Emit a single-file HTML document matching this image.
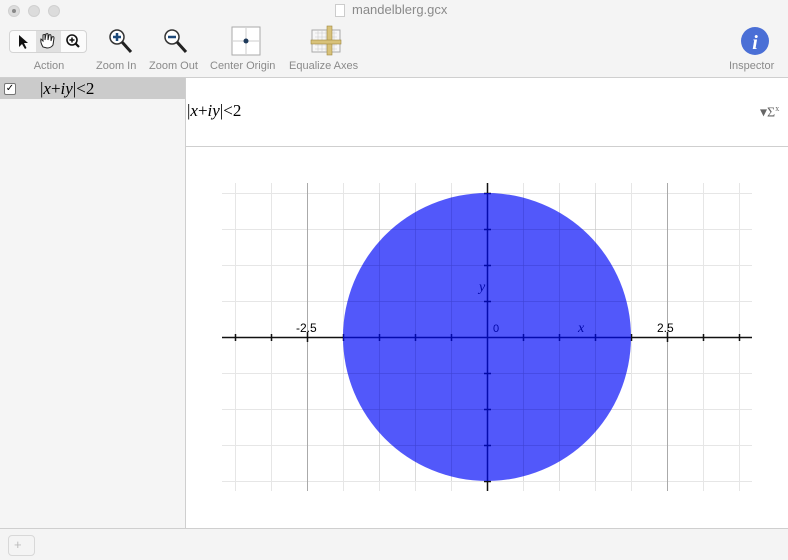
<!DOCTYPE html>
<html><head><meta charset="utf-8"><style>
*{margin:0;padding:0;box-sizing:border-box}
body{width:788px;height:560px;overflow:hidden;background:#fff;font-family:"Liberation Sans",sans-serif;position:relative}
.tb{position:absolute;left:0;top:0;width:788px;height:78px;background:#f4f4f4;border-bottom:1px solid #cfcfcf}
.dot{position:absolute;top:5px;width:12px;height:12px;border-radius:50%;background:#dcdcdc;border:1px solid #d0d0d0}
.lbl{position:absolute;top:60px;font-size:11px;color:#8a8a8a;text-align:center}
.side{position:absolute;left:0;top:78px;width:186px;height:450px;background:#f5f5f5;border-right:1px solid #cfcfcf}
.bot{position:absolute;left:0;top:528px;width:788px;height:32px;background:#f4f4f4;border-top:1px solid #cfcfcf}
.m{font-family:"Liberation Serif",serif}
</style></head><body>
<div class="tb">
<div class="dot" style="left:8px"><div style="width:4px;height:4px;border-radius:50%;background:#888;margin:3px"></div></div>
<div class="dot" style="left:28px"></div>
<div class="dot" style="left:48px"></div>
<div style="position:absolute;left:335px;top:4px;width:10px;height:13px;background:#fff;border:1px solid #ccc"></div>
<div style="position:absolute;left:352px;top:2px;font-size:13px;color:#8a8a8a">mandelblerg.gcx</div>
<div style="position:absolute;left:9px;top:30px;width:78px;height:23px;border:1px solid #d4d4d4;border-radius:4px;background:#fbfbfb"></div>
<div style="position:absolute;left:36px;top:31px;width:25px;height:21px;background:#e0e0e0"></div>
<svg style="position:absolute;left:0;top:0" width="788" height="78">
<path d="M19 35 L19 47 L22 44 L25 49 L26.5 48 L24 43 L28 43 Z" fill="#111"/>
<path d="M43 47 Q40 42 41 39 L43 41 L43 35 Q45 34 45 35 L45 40 L46 34 Q48 33 48 34.5 L48 40 L49 35 Q51 34 51 36 L51 41 L52 37 Q54 36 54 38 L53 45 Q51 48 47 48 Z" fill="#fff" stroke="#222" stroke-width="1"/>
<circle cx="72" cy="40" r="5" fill="none" stroke="#111" stroke-width="1.6"/><path d="M69.5 40h5M72 37.5v5" stroke="#111" stroke-width="1.5"/><path d="M75.5 43.5 L79 47" stroke="#111" stroke-width="2.2"/>
<circle cx="117" cy="37" r="7" fill="#fff" stroke="#333" stroke-width="1.5"/><path d="M113 37h8M117 33v8" stroke="#1e4a7a" stroke-width="2.5"/><path d="M122 42 L131 52" stroke="#222" stroke-width="3"/>
<circle cx="172" cy="37" r="7" fill="#fff" stroke="#333" stroke-width="1.5"/><path d="M168 37h8" stroke="#1e4a7a" stroke-width="2.5"/><path d="M177 42 L186 52" stroke="#222" stroke-width="3"/>
<rect x="232" y="27" width="28" height="28" fill="#fff" stroke="#aaa"/><path d="M246 28v26M233 41h26" stroke="#ccc"/><circle cx="246" cy="41" r="2.5" fill="#1e3a5a"/>
<rect x="312" y="30" width="28" height="22" fill="#f7f7f7" stroke="#aaa"/><path d="M315 33h22M315 37h22M315 41h22M315 45h22M315 49h22M318 30v22M322 30v22M326 30v22M330 30v22M334 30v22" stroke="#ccc" stroke-width=".6"/>
<rect x="327" y="26" width="5" height="29" fill="#d8c27a" stroke="#a08840" stroke-width=".6"/><rect x="311" y="40" width="30" height="4" fill="#d8c27a" stroke="#a08840" stroke-width=".6"/>
<circle cx="755" cy="41" r="14" fill="#4a6fd6"/><text x="755" y="49" font-family="Liberation Serif" font-style="italic" font-weight="bold" font-size="20" fill="#fff" text-anchor="middle">i</text>
</svg>
<div class="lbl" style="left:22px;width:54px">Action</div>
<div class="lbl" style="left:96px">Zoom In</div>
<div class="lbl" style="left:149px">Zoom Out</div>
<div class="lbl" style="left:210px">Center Origin</div>
<div class="lbl" style="left:289px">Equalize Axes</div>
<div class="lbl" style="left:729px">Inspector</div>
</div>
<div class="side">
<div style="position:absolute;left:0;top:0;width:185px;height:21px;background:#cbcbcb"></div>
<div style="position:absolute;left:4px;top:5px;width:12px;height:12px;border:1px solid #777;border-radius:2px;background:#fff;font-size:10px;line-height:10px;text-align:center">✓</div>
<div class="m" style="position:absolute;left:40px;top:1px;font-size:17px">|<i>x</i>+<i>iy</i>|&lt;2</div>
</div>
<div class="m" style="position:absolute;left:187px;top:101px;font-size:17px">|<i>x</i>+<i>iy</i>|&lt;2</div>
<div class="m" style="position:absolute;left:760px;top:104px;font-size:14px;color:#666">▾Σ<sup style="font-size:8px">x</sup></div>
<div style="position:absolute;left:186px;top:146px;width:602px;height:1px;background:#cfcfcf"></div>
<svg style="position:absolute;left:0;top:0" width="788" height="528">
<g stroke="#e6e6e6" stroke-width="1">
<path d="M235.5 183V491M271.5 183V491M343.5 183V491M379.5 183V491M415.5 183V491M451.5 183V491M523.5 183V491M559.5 183V491M595.5 183V491M631.5 183V491M703.5 183V491M739.5 183V491"/>
<path d="M222 193.5H752M222 229.5H752M222 265.5H752M222 301.5H752M222 373.5H752M222 409.5H752M222 445.5H752M222 481.5H752"/>
</g>
<path d="M307.5 183V491M667.5 183V491" stroke="#aaa"/>
<path d="M222 337.5H752M487.5 183V491" stroke="#111" stroke-width="1.5"/>
<g stroke="#111" stroke-width="1.5"><path d="M235.5 334v7M271.5 334v7M307.5 332v10M343.5 334v7M379.5 334v7M415.5 334v7M451.5 334v7M523.5 334v7M559.5 334v7M595.5 334v7M631.5 334v7M667.5 332v10M703.5 334v7M739.5 334v7M484 193.5h7M484 229.5h7M484 265.5h7M484 301.5h7M484 373.5h7M484 409.5h7M484 445.5h7M484 481.5h7"/></g>
<text x="296" y="332" font-size="12" fill="#000">-2.5</text>
<text x="657" y="332" font-size="12" fill="#000">2.5</text>
<text x="493" y="332" font-size="11" fill="#000">0</text>
<text x="578" y="332" font-size="14" font-family="Liberation Serif" font-style="italic" fill="#000">x</text>
<text x="479" y="291" font-size="14" font-family="Liberation Serif" font-style="italic" fill="#000">y</text>
<circle cx="487" cy="337" r="144" fill="rgb(0,9,247)" fill-opacity="0.68"/>
<g stroke="rgba(0,0,0,0.05)" stroke-width="1">
<path d="M379.5 193V481M415.5 193V481M451.5 193V481M523.5 193V481M559.5 193V481M595.5 193V481"/>
<path d="M343 229.5H631M343 265.5H631M343 301.5H631M343 373.5H631M343 409.5H631M343 445.5H631"/>
</g>
</svg>
<div class="bot"><div style="position:absolute;left:8px;top:6px;width:27px;height:21px;border:1px solid #d8d8d8;border-radius:4px;color:#bbb;font-size:13px;line-height:18px;padding-left:5px">+</div></div>
</body></html>
